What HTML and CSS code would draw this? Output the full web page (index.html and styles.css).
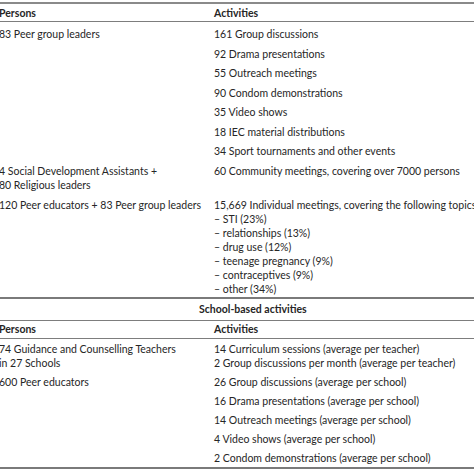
FILE: index.html
```html
<!DOCTYPE html>
<html lang="en">
<head>
<meta charset="utf-8">
<title>Activities</title>
<link rel="stylesheet" href="styles.css">
</head>
<body>
<div class="sheet">
  <div class="row head first">
    <div class="c1">Persons</div>
    <div class="c2">Activities</div>
  </div>
  <div class="group community">
    <div class="row lead"><div class="c1">83 Peer group leaders</div><div class="c2">161 Group discussions</div></div>
    <div class="row"><div class="c1"></div><div class="c2">92 Drama presentations</div></div>
    <div class="row"><div class="c1"></div><div class="c2">55 Outreach meetings</div></div>
    <div class="row"><div class="c1"></div><div class="c2">90 Condom demonstrations</div></div>
    <div class="row"><div class="c1"></div><div class="c2">35 Video shows</div></div>
    <div class="row"><div class="c1"></div><div class="c2">18 IEC material distributions</div></div>
    <div class="row"><div class="c1"></div><div class="c2">34 Sport tournaments and other events</div></div>
    <div class="row two"><div class="c1">4 Social Development Assistants +<br>80 Religious leaders</div><div class="c2">60 Community meetings, covering over 7000 persons</div></div>
    <div class="row list"><div class="c1">120 Peer educators + 83 Peer group leaders</div><div class="c2">15,669 Individual meetings, covering the following topics<br>– STI (23%)<br>– relationships (13%)<br>– drug use (12%)<br>– teenage pregnancy (9%)<br>– contraceptives (9%)<br>– other (34%)</div></div>
  </div>
  <div class="section">School-based activities</div>
  <div class="row head">
    <div class="c1">Persons</div>
    <div class="c2">Activities</div>
  </div>
  <div class="group school">
    <div class="row two"><div class="c1">74 Guidance and Counselling Teachers<br>in 27 Schools</div><div class="c2">14 Curriculum sessions (average per teacher)<br>2 Group discussions per month (average per teacher)</div></div>
    <div class="row"><div class="c1">600 Peer educators</div><div class="c2">26 Group discussions (average per school)</div></div>
    <div class="row"><div class="c1"></div><div class="c2">16 Drama presentations (average per school)</div></div>
    <div class="row"><div class="c1"></div><div class="c2">14 Outreach meetings (average per school)</div></div>
    <div class="row"><div class="c1"></div><div class="c2">4 Video shows (average per school)</div></div>
    <div class="row"><div class="c1"></div><div class="c2">2 Condom demonstrations (average per school)</div></div>
  </div>
</div>
</body>
</html>
```
FILE: styles.css
```css
html, body {
  margin: 0;
  padding: 0;
  background: #ffffff;
  overflow: hidden;
}

body {
  font-family: Lato, "Open Sans", "Liberation Sans", sans-serif;
  font-size: 10.5px;
  line-height: 14px;
  color: #262626;
}

.sheet {
  padding-top: 2px;
  margin-left: -1px;
  width: 475px;
}

.row {
  display: grid;
  grid-template-columns: 215px 1fr;
  padding: 3px 0 2.5px;
  white-space: nowrap;
}

.head {
  font-weight: 700;
  padding: 1.5px 0;
  border-bottom: 1.5px solid #7d7d7d;
}

.head.first {
  border-top: 2px solid #8a8a8a;
}

.row.lead {
  padding-top: 5px;
}

.row.two {
  padding-bottom: 4px;
}

.row.list {
  padding: 2.5px 0 0.5px;
}

.community {
  border-bottom: 2px solid #7a7a7a;
}

.school .row {
  padding-bottom: 2px;
}

.school .row.two {
  padding-top: 3px;
  padding-bottom: 2px;
}

.school {
  border-bottom: 2px solid #7a7a7a;
}

.section {
  font-weight: 700;
  padding: 3px 0 4px 200px;
  border-bottom: 1.5px solid #7d7d7d;
}
```
